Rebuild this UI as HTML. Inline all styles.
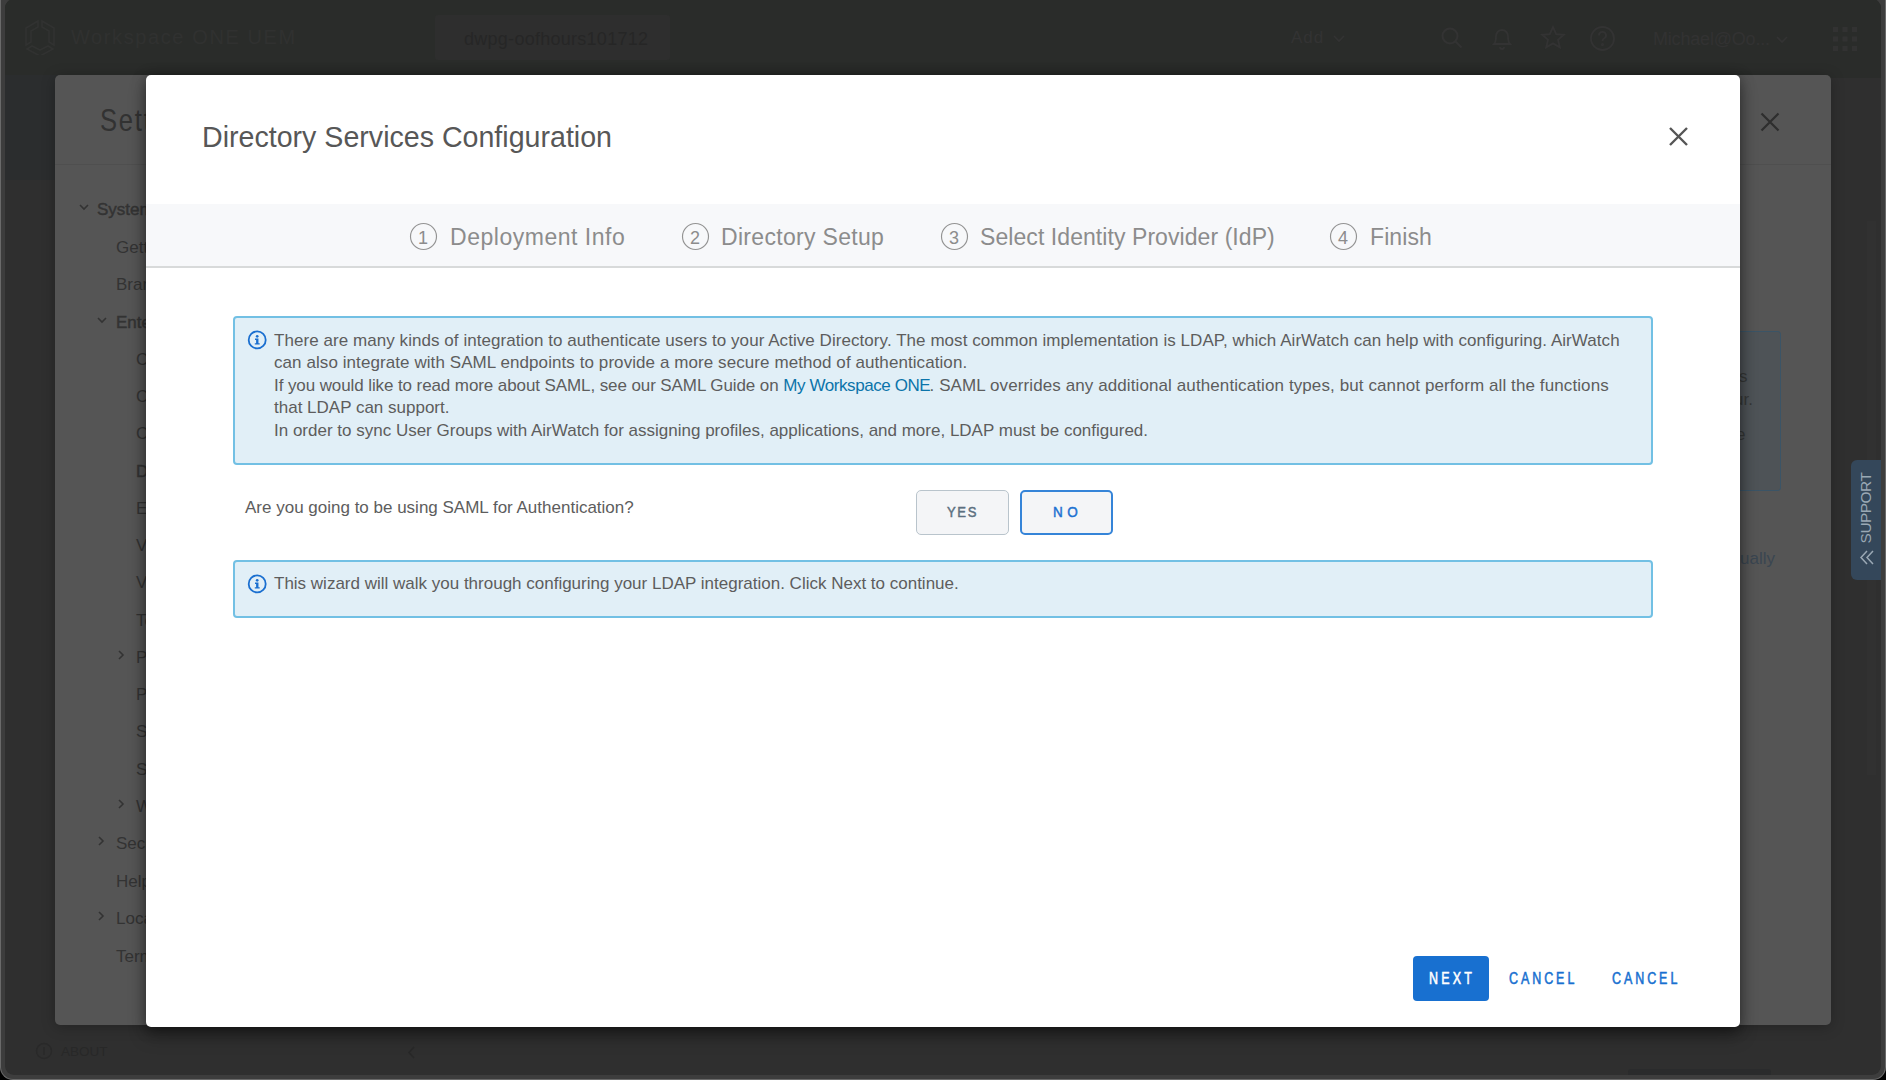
<!DOCTYPE html>
<html><head><meta charset="utf-8">
<style>
*{box-sizing:border-box;margin:0;padding:0}
html,body{width:1886px;height:1080px;overflow:hidden;background:#000;font-family:"Liberation Sans",sans-serif}
.a{position:absolute}
.t{position:absolute;white-space:nowrap;line-height:1}
#win{left:0;top:-12px;width:1886px;height:1092px;background:#6a6a6a;border-radius:13px}
#win2{left:1px;top:-11px;width:1884px;height:1090px;background:#3d3d3d;border-radius:12px}
#page{left:5px;top:-1px;width:1876px;height:1076px;background:#2f2f2f;border-radius:9px;overflow:hidden}
#outer{left:55px;top:75px;width:1776px;height:950px;background:#555555;border-radius:5px;overflow:hidden;box-shadow:0 2px 14px rgba(0,0,0,0.25)}
#inner{left:146px;top:75px;width:1594px;height:952px;background:#fff;border-radius:5px;box-shadow:0 2px 14px rgba(0,0,0,0.38),0 9px 18px rgba(0,0,0,0.28)}
.sb{position:absolute;color:#333;font-size:17px;white-space:nowrap;line-height:1}
.step{position:absolute;white-space:nowrap;line-height:1;color:#8c8c8c;font-size:23px}
.circ{position:absolute}
.info{position:absolute;left:233px;width:1420px;background:#e1eff7;border:2px solid #72c0e4;border-radius:4px}
.itxt{position:absolute;color:#5d5d5d;font-size:17px;white-space:nowrap;line-height:1}
.bt{position:absolute;white-space:nowrap;line-height:1;-webkit-text-stroke:0.3px currentColor}
</style></head><body>
<div id="win" class="a"></div><div id="win2" class="a"></div>
<div id="page" class="a">
  <div class="a" style="left:0;top:0;width:1876px;height:79px;background:#2a2c2a"></div>
  <div class="a" style="left:0;top:76px;width:140px;height:105px;background:#2b2d2e"></div>
  <div class="a" style="left:1862px;top:222px;width:9px;height:554px;background:#313131"></div>
  <!-- header contents (coords relative to page: x-5, y+8) -->
  <svg class="a" style="left:18px;top:20px" width="34" height="36" viewBox="0 0 34 36" fill="none" stroke="#313231" stroke-width="1.6"><path d="M15 2L3 9v17l5-3V12l7-4z"/><path d="M19 2l12 7v17l-5-3V12l-7-4z"/><path d="M4 30l13 7 13-7-5-3-8 4-8-4z"/></svg>
  <div class="t" style="left:66px;top:28px;font-size:20px;letter-spacing:1.6px;color:#303130">Workspace ONE UEM</div>
  <div class="a" style="left:430px;top:16px;width:235px;height:45px;background:#2e2e2e;border-radius:3px"></div>
  <div class="t" style="left:459px;top:31px;font-size:18px;letter-spacing:0.27px;color:#262626">dwpg-oofhours101712</div>
  <div class="t" style="left:1286px;top:30px;font-size:17px;letter-spacing:1px;color:#333">Add</div>
  <svg class="a" style="left:1328px;top:36px" width="12" height="8"><path d="M1 1l5 5 5-5" stroke="#333" stroke-width="1.6" fill="none"/></svg>
  <svg class="a" style="left:1435px;top:27px" width="24" height="24" fill="none" stroke="#333" stroke-width="2"><circle cx="10" cy="10" r="7.5"/><path d="M15.5 15.5l6 6"/></svg>
  <svg class="a" style="left:1485px;top:26px" width="24" height="26" fill="none" stroke="#333" stroke-width="1.8"><path d="M4 19c2-2 2-4 2-8a6 6 0 0 1 12 0c0 4 0 6 2 8z"/><path d="M10 22a2 2 0 0 0 4 0"/></svg>
  <svg class="a" style="left:1535px;top:26px" width="26" height="26" fill="none" stroke="#333" stroke-width="1.8"><path d="M13 2l3.2 7.2 7.6.6-5.8 5 1.8 7.6L13 18.4l-6.8 4 1.8-7.6-5.8-5 7.6-.6z"/></svg>
  <svg class="a" style="left:1584px;top:26px" width="27" height="27" fill="none" stroke="#333" stroke-width="1.8"><circle cx="13.5" cy="13.5" r="11.5"/><path d="M10 10.5a3.5 3.5 0 1 1 5 3c-1.2.6-1.5 1.3-1.5 2.5"/><circle cx="13.5" cy="19.5" r="0.6"/></svg>
  <div class="t" style="left:1648px;top:31px;font-size:18px;letter-spacing:-0.19px;color:#323232">Michael@Oo...</div>
  <svg class="a" style="left:1771px;top:37px" width="12" height="8"><path d="M1 1l5 5 5-5" stroke="#333" stroke-width="1.6" fill="none"/></svg>
  <svg class="a" style="left:1828px;top:28px" width="26" height="26" fill="#323232"><rect x="0" y="0" width="5" height="5"/><rect x="9.5" y="0" width="5" height="5"/><rect x="19" y="0" width="5" height="5"/><rect x="0" y="9.5" width="5" height="5"/><rect x="9.5" y="9.5" width="5" height="5"/><rect x="19" y="9.5" width="5" height="5"/><rect x="0" y="19" width="5" height="5"/><rect x="9.5" y="19" width="5" height="5"/><rect x="19" y="19" width="5" height="5"/></svg>
  <!-- support tab -->
  <div class="a" style="left:1846px;top:461px;width:30px;height:120px;background:#34475a;border-radius:6px 0 0 6px"></div>
  <div class="t" style="left:1861px;top:508.5px;font-size:15.5px;letter-spacing:-0.55px;color:#9aa8b4;transform:translate(-50%,-50%) rotate(-90deg)">SUPPORT</div>
  <svg class="a" style="left:1854px;top:551px" width="16" height="15" fill="none" stroke="#9aa8b4" stroke-width="1.5"><path d="M8 1L2 7.5 8 14M14 1L8 7.5 14 14"/></svg>
  <div class="a" style="left:1623px;top:1069.5px;width:143px;height:6px;background:#2a2b2c;border-radius:3px 3px 0 0"></div>
  <!-- footer about -->
  <svg class="a" style="left:30px;top:1043px" width="18" height="18" fill="none" stroke="#292929" stroke-width="1.4"><circle cx="9" cy="9" r="7.5"/><path d="M9 5v8"/></svg>
  <div class="t" style="left:56px;top:1046px;font-size:13.5px;letter-spacing:0px;color:#282828">ABOUT</div>
  <svg class="a" style="left:402px;top:1047px" width="9" height="13"><path d="M7 1L2 6.5 7 12" stroke="#282828" stroke-width="1.6" fill="none"/></svg>
</div>

<div id="outer" class="a">
  <div class="t" style="left:44.5px;top:29px;font-size:32px;letter-spacing:2.2px;color:#323232;transform:scaleX(0.8);transform-origin:0 0">Settings</div>
  <svg class="a" style="left:1705px;top:37px" width="20" height="20"><path d="M1.5 1.5L18.5 18.5M18.5 1.5L1.5 18.5" stroke="#2e2e2e" stroke-width="2.2"/></svg>
  <div class="a" style="left:0;top:89px;width:100%;height:1px;background:#4f4f4f"></div>
  <svg class="a" style="left:24px;top:129px" width="10" height="7"><path d="M1 1l4 4 4-4" stroke="#333" stroke-width="1.6" fill="none"/></svg>
  <div class="sb" style="left:42px;top:126px;-webkit-text-stroke:0.45px #333">System</div>
  <div class="sb" style="left:61px;top:164px">Getting Started</div>
  <div class="sb" style="left:61px;top:201px">Branding</div>
  <svg class="a" style="left:42px;top:242px" width="10" height="7"><path d="M1 1l4 4 4-4" stroke="#333" stroke-width="1.6" fill="none"/></svg>
  <div class="sb" style="left:61px;top:239px;-webkit-text-stroke:0.45px #333">Enterprise Integration</div>
  <div class="sb" style="left:81px;top:276px">Cloud Connector</div>
  <div class="sb" style="left:81px;top:313px">Content Gateway</div>
  <div class="sb" style="left:81px;top:350px">Certificate Authorities</div>
  <div class="sb" style="left:81px;top:388px;-webkit-text-stroke:0.45px #333">Directory Services</div>
  <div class="sb" style="left:81px;top:425px">Email (SMTP)</div>
  <div class="sb" style="left:81px;top:462px">VMware Tunnel</div>
  <div class="sb" style="left:81px;top:499px">VMware Identity Manager</div>
  <div class="sb" style="left:81px;top:537px">Telecom</div>
  <svg class="a" style="left:63px;top:575px" width="7" height="10"><path d="M1 1l4 4-4 4" stroke="#333" stroke-width="1.6" fill="none"/></svg>
  <div class="sb" style="left:81px;top:574px">Pull Service Installers</div>
  <div class="sb" style="left:81px;top:611px">Personal Content</div>
  <div class="sb" style="left:81px;top:648px">SQL Reporting</div>
  <div class="sb" style="left:81px;top:686px">Syslog</div>
  <svg class="a" style="left:63px;top:724px" width="7" height="10"><path d="M1 1l4 4-4 4" stroke="#333" stroke-width="1.6" fill="none"/></svg>
  <div class="sb" style="left:81px;top:723px">Workspace ONE</div>
  <svg class="a" style="left:43px;top:761px" width="7" height="10"><path d="M1 1l4 4-4 4" stroke="#333" stroke-width="1.6" fill="none"/></svg>
  <div class="sb" style="left:61px;top:760px">Security</div>
  <div class="sb" style="left:61px;top:798px">Help</div>
  <svg class="a" style="left:43px;top:836px" width="7" height="10"><path d="M1 1l4 4-4 4" stroke="#333" stroke-width="1.6" fill="none"/></svg>
  <div class="sb" style="left:61px;top:835px">Localization</div>
  <div class="sb" style="left:61px;top:873px">Terms of Use</div>
  <!-- right content peeking -->
  <div class="a" style="left:1620px;top:256px;width:106px;height:160px;border:1.5px solid #3b5466;background:#4e5357;border-radius:3px"></div>
  <div class="t" style="left:1684px;top:293px;font-size:17px;color:#363838">s</div>
  <div class="t" style="left:1679px;top:315.5px;font-size:17px;color:#363838">ur.</div>
  <div class="t" style="left:1681px;top:350.5px;font-size:17px;color:#363838">e</div>
  <div class="t" style="left:1685px;top:474.5px;font-size:17px;color:#3a4651">ually</div>
</div>

<div id="inner" class="a"></div>
<!-- modal content -->
<div class="t" style="left:202px;top:123px;font-size:28.6px;color:#575757">Directory Services Configuration</div>
<svg class="a" style="left:1668px;top:126px" width="21" height="21" viewBox="0 0 21 21"><path d="M2 2L19 19M19 2L2 19" stroke="#555" stroke-width="2.4"/></svg>
<div class="a" style="left:146px;top:204px;width:1594px;height:64px;background:#f7f8fa;border-bottom:2px solid #d8dada"></div>

<svg class="circ" style="left:409px;top:222px" width="29" height="29"><circle cx="14.5" cy="14.5" r="13" fill="none" stroke="#939393" stroke-width="1.15"/></svg>
<div class="step" style="left:450px;top:226px;letter-spacing:0.52px">Deployment Info</div>
<svg class="circ" style="left:681px;top:222px" width="29" height="29"><circle cx="14.5" cy="14.5" r="13" fill="none" stroke="#939393" stroke-width="1.15"/></svg>
<div class="step" style="left:721px;top:226px;letter-spacing:0.31px">Directory Setup</div>
<svg class="circ" style="left:940px;top:222px" width="29" height="29"><circle cx="14.5" cy="14.5" r="13" fill="none" stroke="#939393" stroke-width="1.15"/></svg>
<div class="step" style="left:980px;top:226px;letter-spacing:0.07px">Select Identity Provider (IdP)</div>
<svg class="circ" style="left:1329px;top:222px" width="29" height="29"><circle cx="14.5" cy="14.5" r="13" fill="none" stroke="#939393" stroke-width="1.15"/></svg>
<div class="step" style="left:1370px;top:226px;letter-spacing:0.1px">Finish</div>
<div class="step" style="left:418px;top:229px;font-size:18px">1</div>
<div class="step" style="left:690px;top:229px;font-size:18px">2</div>
<div class="step" style="left:949px;top:229px;font-size:18px">3</div>
<div class="step" style="left:1338px;top:229px;font-size:18px">4</div>

<div class="info" style="top:316px;height:148.5px"></div>
<svg class="a" style="left:247.1px;top:330.4px" width="20" height="20" viewBox="0 0 20 20"><circle cx="10.2" cy="9.9" r="8.5" fill="none" stroke="#1a6fd0" stroke-width="1.8"/><circle cx="10.2" cy="6.3" r="1.35" fill="#1a6fd0"/><path d="M8 8.6h3.45v4.7h1.25v1.3H7.8v-1.3h1.3v-3.4H8z" fill="#1a6fd0"/></svg>
<div class="itxt" style="left:274px;top:332px;letter-spacing:0.057px">There are many kinds of integration to authenticate users to your Active Directory. The most common implementation is LDAP, which AirWatch can help with configuring. AirWatch</div>
<div class="itxt" style="left:274px;top:354.4px;letter-spacing:0.077px">can also integrate with SAML endpoints to provide a more secure method of authentication.</div>
<div class="itxt" style="left:274px;top:376.8px;letter-spacing:-0.095px">If you would like to read more about SAML, see our SAML Guide on</div>
<div class="itxt" style="left:783.3px;top:376.8px;letter-spacing:-0.42px;color:#0b74aa">My Workspace ONE</div>
<div class="itxt" style="left:929.5px;top:376.8px;letter-spacing:0.1px">. SAML overrides any additional authentication types, but cannot perform all the functions</div>
<div class="itxt" style="left:274px;top:399.2px">that LDAP can support.</div>
<div class="itxt" style="left:274px;top:421.6px">In order to sync User Groups with AirWatch for assigning profiles, applications, and more, LDAP must be configured.</div>

<div class="itxt" style="left:245px;top:498.5px">Are you going to be using SAML for Authentication?</div>
<div class="a" style="left:916px;top:489.5px;width:93px;height:45px;border:1px solid #b9c4cc;background:#f4f5f7;border-radius:5px"></div>
<div class="a" style="left:1020px;top:489.5px;width:93px;height:45px;border:2px solid #3584d8;background:#f4f5f7;border-radius:5px"></div>
<div class="bt" style="left:947px;top:504.1px;font-size:15.4px;letter-spacing:1.9px;color:#5c7080;-webkit-text-stroke:0.5px #5c7080;transform:scaleX(0.85);transform-origin:0 0">YES</div>
<div class="bt" style="left:1053.3px;top:504.1px;font-size:15.4px;letter-spacing:5.2px;color:#1f72d2;-webkit-text-stroke:0.5px #1f72d2;transform:scaleX(0.88);transform-origin:0 0">NO</div>

<div class="info" style="top:559.5px;height:58px"></div>
<svg class="a" style="left:247px;top:573.5px" width="20" height="20" viewBox="0 0 20 20"><circle cx="10.2" cy="9.9" r="8.5" fill="none" stroke="#1a6fd0" stroke-width="1.8"/><circle cx="10.2" cy="6.3" r="1.35" fill="#1a6fd0"/><path d="M8 8.6h3.45v4.7h1.25v1.3H7.8v-1.3h1.3v-3.4H8z" fill="#1a6fd0"/></svg>
<div class="itxt" style="left:274px;top:575px">This wizard will walk you through configuring your LDAP integration. Click Next to continue.</div>

<div class="a" style="left:1413px;top:956px;width:76px;height:45px;background:#1870d0;border-radius:4px"></div>
<div class="bt" style="left:1428.65px;top:971px;font-size:16px;letter-spacing:4.06px;color:#fff;-webkit-text-stroke:0.55px #fff;transform:scaleX(0.78);transform-origin:0 0">NEXT</div>
<div class="bt" style="left:1509.3px;top:971px;font-size:16px;letter-spacing:3.77px;color:#1870d0;-webkit-text-stroke:0.55px #1870d0;transform:scaleX(0.78);transform-origin:0 0">CANCEL</div>
<div class="bt" style="left:1612.4px;top:971px;font-size:16px;letter-spacing:3.77px;color:#1870d0;-webkit-text-stroke:0.55px #1870d0;transform:scaleX(0.78);transform-origin:0 0">CANCEL</div>
</body></html>
